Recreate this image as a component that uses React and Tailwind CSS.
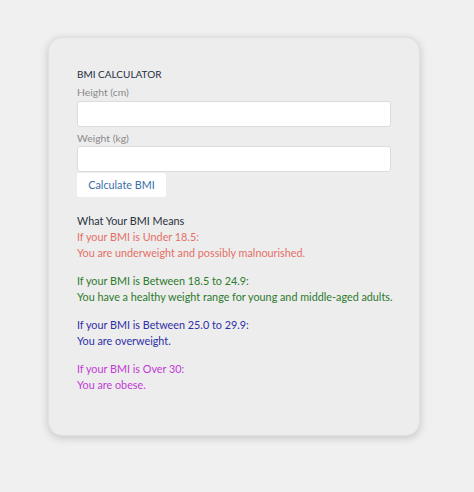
const ranges = [
	{
		title: 'If your BMI is Under 18.5:',
		text: 'You are underweight and possibly malnourished.',
		color: 'text-[#e56f66]',
	},
	{
		title: 'If your BMI is Between 18.5 to 24.9:',
		text: 'You have a healthy weight range for young and middle-aged adults.',
		color: 'text-[#2c7a2c]',
	},
	{
		title: 'If your BMI is Between 25.0 to 29.9:',
		text: 'You are overweight.',
		color: 'text-[#2e2ea8]',
	},
	{
		title: 'If your BMI is Over 30:',
		text: 'You are obese.',
		color: 'text-[#c13ad4]',
	},
];

const App = () => {
	return (
		<div
			className="min-h-[492px] w-full bg-[#f0f0f0] pt-[37px] pl-[48px]"
			style={{ fontFamily: 'Lato, "Noto Sans", sans-serif' }}
		>
			<div className="w-[372px] h-[399px] bg-[#ededed] rounded-[14px] border border-[#e0e0e0] shadow-[0_2px_8px_rgba(0,0,0,0.18)] pt-[28px] px-[28px]">
				<h1 className="text-[10px] leading-[16px] text-[#1e2f40] whitespace-nowrap">BMI CALCULATOR</h1>
				<label className="block mt-[2px] text-[10.4px] leading-[16px] text-[#8a8a8a]">
					Height (cm)
				</label>
				<input
					type="text"
					className="block mt-[1px] w-[314px] h-[26px] bg-white border border-[#dcdcdc] rounded-[3px]"
				/>
				<label className="block mt-[3px] text-[10.4px] leading-[16px] text-[#8a8a8a]">
					Weight (kg)
				</label>
				<input
					type="text"
					className="block w-[314px] h-[26px] bg-white border border-[#dcdcdc] rounded-[3px]"
				/>
				<button className="block mt-[1px] w-[89px] h-[24px] bg-white rounded-[2px] text-[10.8px] text-[#3a6ea8] whitespace-nowrap">
					Calculate BMI
				</button>
				<div className="mt-[16px] whitespace-nowrap">
					<p className="text-[10.8px] leading-[16px] text-[#2a3340]">What Your BMI Means</p>
					{ranges.map((item, index) => (
						<div key={index} className={`${item.color} text-[10.8px] leading-[16px] ${index > 0 ? 'mt-[12px]' : ''}`}>
							<p>{item.title}</p>
							<p>{item.text}</p>
						</div>
					))}
				</div>
			</div>
		</div>
	);
};

export default App;
